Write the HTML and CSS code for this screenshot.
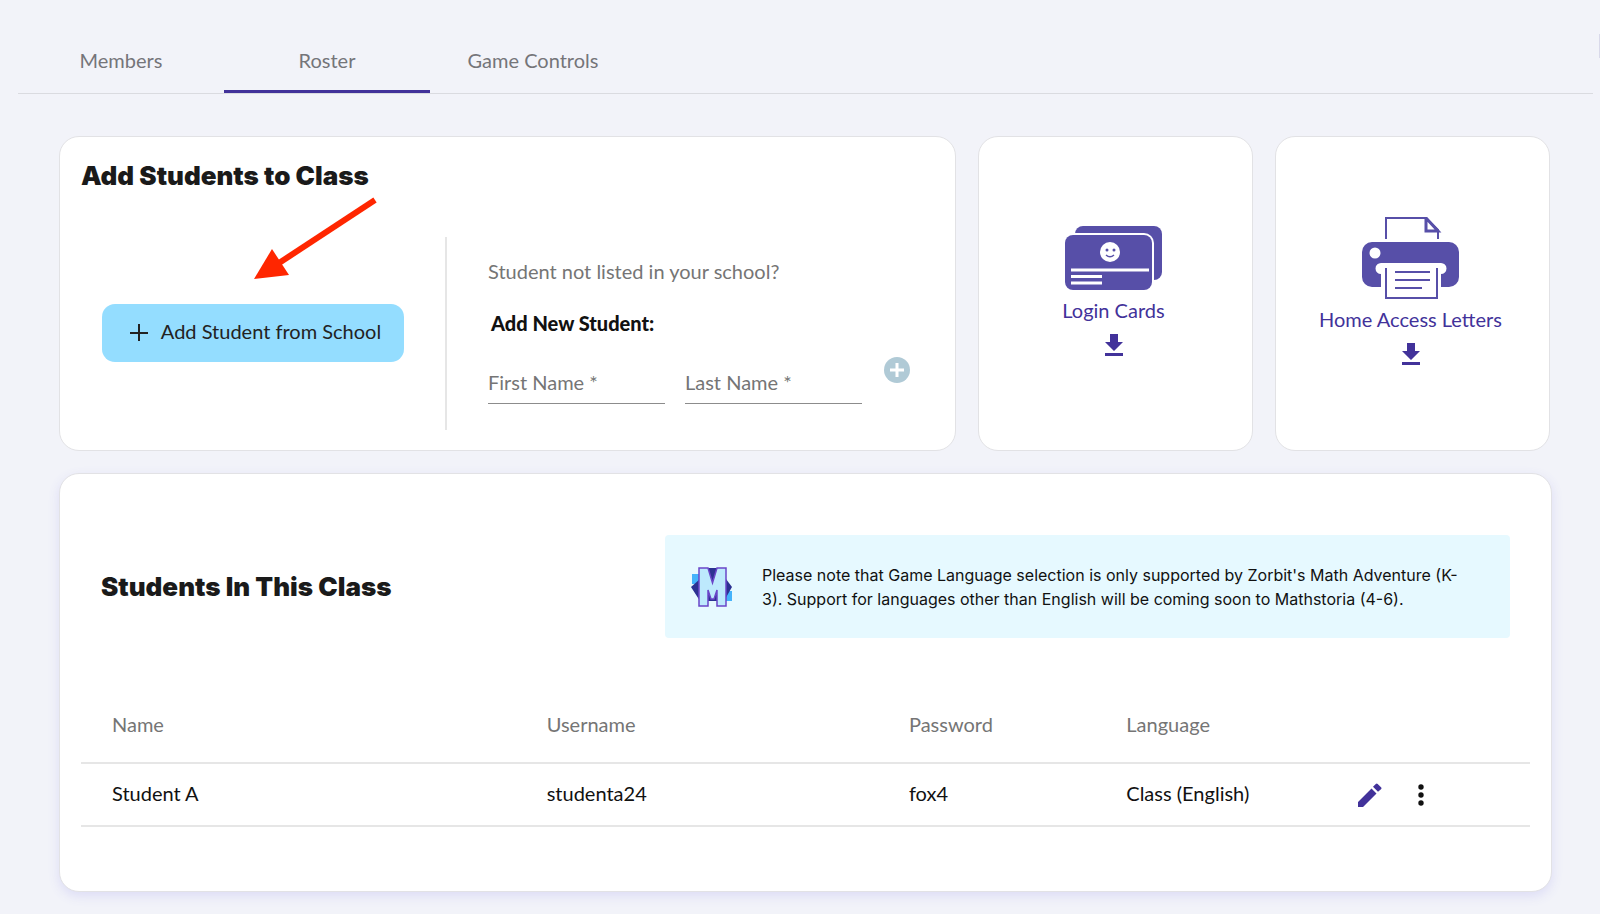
FILE: index.html
```html
<!DOCTYPE html>
<html lang="en">
<head>
    <meta charset="utf-8"/>
    <title>Class Roster</title>
    <link rel="stylesheet" href="styles.css">
</head>
<body>

<button class="side-handle" aria-label="Open side panel"></button>

<nav class="tabs">
    <a href="#members">Members</a>
    <a href="#roster" class="active">Roster</a>
    <a href="#controls">Game Controls</a>
</nav>

<main>
    <div class="cards">
        <section class="card add-students">
            <h2>Add Students to Class</h2>
            <!-- callout arrow -->
            <svg class="arrow" width="124" height="84" viewBox="0 0 124 84">
                <path d="M121 3L22 68" stroke="#ff2600" stroke-width="6"/>
                <path d="M0 82L18 52L35 78Z" fill="#ff2600"/>
            </svg>
            <div class="add-columns">
                <div class="from-school">
                    <button class="add-button">
                        <svg width="20" height="20" viewBox="0 0 20 20"><path d="M10 3v18M1 12h18" stroke="#222" stroke-width="2"/></svg>
                        Add Student from School
                    </button>
                </div>
                <div class="new-student">
                    <p>Student not listed in your school?</p>
                    <h3>Add New Student:</h3>
                    <form>
                        <input type="text" aria-label="First Name" placeholder="First Name *">
                        <input type="text" aria-label="Last Name" placeholder="Last Name *">
                        <button type="button" class="icon-button" aria-label="Add student">
                            <svg width="26" height="26" viewBox="0 0 26 26"><circle cx="13" cy="13" r="13" fill="#b0cad6"/><path d="M13 6v14M6 13h14" stroke="#fff" stroke-width="3"/></svg>
                        </button>
                    </form>
                </div>
            </div>
        </section>

        <a href="#login-cards" class="card download">
            <svg width="98" height="66" viewBox="0 0 98 66">
                <rect x="10" y="1" width="87" height="54" rx="8" fill="#574fa8"/>
                <rect x="-1" y="8" width="90" height="60" rx="10" fill="#fff"/>
                <rect x="0" y="10" width="87" height="55" rx="8" fill="#574fa8"/>
                <circle cx="45" cy="27" r="10" fill="#fff"/>
                <circle cx="42" cy="25" r="1.5" fill="#574fa8"/>
                <circle cx="49" cy="25" r="1.5" fill="#574fa8"/>
                <path d="M41 30q4 3.500 8 0" fill="none" stroke="#574fa8" stroke-width="1.500"/>
                <path d="M6 45h78M6 51.500h31M6 58h31" stroke="#fff" stroke-width="3"/>
            </svg>
            <span>Login Cards</span>
            <svg width="18" height="22" viewBox="0 0 18 22"><path d="M5 0h8v8h5l-9 9l-9-9h5zM0 19h18v3H0z" fill="#42329a"/></svg>
        </a>

        <a href="#letters" class="card download">
            <svg width="97" height="83" viewBox="0 0 97 83">
                <path d="M24 22V1h40l12 12v9" fill="none" stroke="#574fa8" stroke-width="2"/>
                <path d="M64 1v13h12z" fill="#fff" stroke="#574fa8" stroke-width="3"/>
                <path d="M10 25h77a10 10 0 0 1 10 10v25a10 10 0 0 1-10 10h-8V57a5 5 0 0 0 0-11H19a5 5 0 0 0 0 11v13h-9a10 10 0 0 1-10-10V35a10 10 0 0 1 10-10z" fill="#574fa8"/>
                <circle cx="13" cy="36" r="5.500" fill="#fff"/>
                <path d="M24 51v30h51V51M33 55h35M33 63h35M33 71h27" fill="none" stroke="#574fa8" stroke-width="2"/>
            </svg>
            <span>Home Access Letters</span>
            <svg width="18" height="22" viewBox="0 0 18 22"><path d="M5 0h8v8h5l-9 9l-9-9h5zM0 19h18v3H0z" fill="#42329a"/></svg>
        </a>
    </div>

    <section class="card students">
        <div class="students-header">
            <h2>Students In This Class</h2>
            <div class="note">
                <svg width="42" height="40" viewBox="0 0 42 40">
                    <path d="M1 7h14v10H1zM28 24h13v10H28z" fill="#44b3fb"/>
                    <path d="M9 12L16 1h13l6 11l6 8l-8 14H9L0 20z" fill="#2c3192"/>
                    <path d="M8 1h9l4.500 15L26 1h9v38h-9V23l-3 9h-3l-3-9v16H8z" fill="#bde9fd" stroke="#6a45c9" stroke-width="1.500"/>
                </svg>
                <p>Please note that Game Language selection is only supported by Zorbit's Math Adventure (K-<wbr>3). Support for languages other than English will be coming soon to Mathstoria (4-6).</p>
            </div>
        </div>

        <table>
            <thead>
                <tr>
                    <th class="col-name">Name</th>
                    <th class="col-username">Username</th>
                    <th class="col-password">Password</th>
                    <th class="col-language">Language</th>
                    <th></th>
                </tr>
            </thead>
            <tbody>
                <tr>
                    <td>Student A</td>
                    <td>studenta24</td>
                    <td>fox4</td>
                    <td>Class (English)</td>
                    <td class="actions-cell">
                        <div class="actions">
                            <button class="icon-button" aria-label="Edit student">
                                <svg width="24" height="24" viewBox="0 0 24 24"><path d="M0 19v5h5L18.500 10.500l-5-5zM23 6.200a1.300 1.300 0 0 0 0-1.900L19.700 1a1.300 1.300 0 0 0-1.900 0L15 3.800l5 5z" fill="#42329a"/></svg>
                            </button>
                            <button class="icon-button" aria-label="More actions">
                                <svg width="24" height="24" viewBox="0 0 24 24"><g fill="#111"><circle cx="12" cy="4" r="2.700"/><circle cx="12" cy="12" r="2.700"/><circle cx="12" cy="20" r="2.700"/></g></svg>
                            </button>
                        </div>
                    </td>
                </tr>
            </tbody>
        </table>
    </section>
</main>

</body>
</html>
```
FILE: styles.css
```css
* {
    box-sizing: border-box;
}

body {
    margin: 0;
    background: #f2f3f9;
    color: #111;
    font-family: Lato, "Open Sans", sans-serif;
    font-size: 20px;
    line-height: 24px;
    overflow-x: hidden;
}

h2, h3, p {
    margin: 0;
}

h2 {
    font-family: Inter, sans-serif;
    font-size: 26px;
    line-height: 32px;
    font-weight: 900;
    color: #1a1a1a;
}

h3 {
    font-size: 20px;
    font-weight: 900;
}

a {
    text-decoration: none;
}

button, input {
    font: inherit;
    border: 0;
    padding: 0;
    background: none;
}

svg {
    display: block;
    flex: none;
}

.side-handle {
    position: absolute;
    top: 34px;
    right: 0;
    width: 1px;
    height: 24px;
    background: #d9d9ea;
}

.tabs {
    display: flex;
    margin: 0 7px 0 18px;
    padding-top: 30px;
    border-bottom: 1px solid #dadbe0;
}

.tabs a {
    width: 206px;
    height: 63px;
    padding-top: 18px;
    text-align: center;
    color: #757579;
    border-bottom: 3px solid transparent;
}

.tabs a.active {
    border-color: #42329a;
}

main {
    padding: 42px 48px 22px 59px;
}

.card {
    background: #fff;
    border: 1px solid #e2e2e5;
    border-radius: 20px;
}

.cards {
    display: grid;
    grid-template-columns: 1fr 275px 275px;
    gap: 22px;
    margin: 0 2px 22px 0;
}

.add-students {
    position: relative;
    height: 315px;
    padding: 23px 21px 20px;
    display: flex;
    flex-direction: column;
}

.arrow {
    position: absolute;
    left: 194px;
    top: 60px;
}

.add-columns {
    display: flex;
    flex: 1;
    margin-top: 45px;
}

.from-school {
    width: 364px;
    padding: 67px 20px 0 21px;
}

.add-button {
    display: flex;
    align-items: center;
    justify-content: center;
    gap: 12px;
    width: 302px;
    height: 58px;
    padding: 0 0 4px 4px;
    border-radius: 13px;
    background: #94ddff;
    color: #222;
}

.new-student {
    flex: 1;
    border-left: 2px solid #e6e6e6;
    padding: 22px 20px 0 41px;
}

.new-student p {
    color: #757575;
}

.new-student h3 {
    margin: 28px 0 0 3px;
}

.new-student form {
    display: flex;
    gap: 20px;
    margin-top: 24px;
}

.new-student input {
    width: 177px;
    height: 45px;
    padding-top: 1px;
    border-bottom: 1px solid #8c8c8c;
}

.new-student input::placeholder {
    color: #757575;
    opacity: 1;
}

.new-student .icon-button {
    align-self: flex-start;
    margin: -2px 0 0 2px;
}

.download {
    display: flex;
    flex-direction: column;
    align-items: center;
    justify-content: center;
    padding: 0 4px 6px 0;
    color: #42329a;
}

.download span {
    margin: 7px 0 12px;
}

.students {
    padding: 61px 21px 64px;
    box-shadow: 0 4px 12px #dcdcf5;
}

.students-header {
    display: flex;
    align-items: center;
    justify-content: space-between;
    padding: 0 20px;
}

.note {
    display: flex;
    align-items: center;
    gap: 29px;
    width: 845px;
    height: 103px;
    padding: 0 40px 0 26px;
    border-radius: 4px;
    background: #e6f9ff;
    font-family: Inter, sans-serif;
    font-size: 16px;
}

table {
    width: 100%;
    margin-top: 56px;
    border-collapse: collapse;
    table-layout: fixed;
}

th, td {
    height: 63px;
    padding: 0 0 4px 31px;
    text-align: left;
    border-bottom: 2px solid #e6e6e6;
}

th {
    height: 69px;
    padding-bottom: 9px;
    font-weight: 400;
    color: #757575;
}

.col-name {
    width: 30%;
}

.col-username {
    width: 25%;
}

.col-password, .col-language {
    width: 15%;
}

.actions-cell {
    padding-bottom: 0;
}

.actions {
    display: flex;
    gap: 27px;
    padding-left: 14px;
}
```
